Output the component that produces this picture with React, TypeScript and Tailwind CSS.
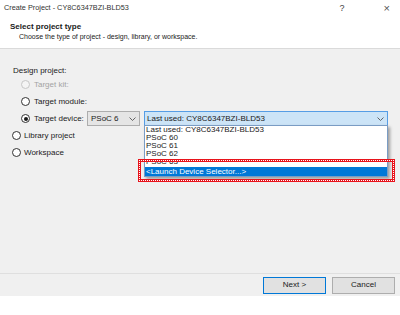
const font = { fontFamily: '"Liberation Sans", Arial, sans-serif' };

function Radio({ checked = false, disabled = false }: { checked?: boolean; disabled?: boolean }) {
  return (
    <span
      className={`flex h-[9px] w-[9px] shrink-0 items-center justify-center rounded-full border ${
        disabled ? 'border-[#c6c6c6] bg-[#f4f4f4]' : 'border-[#333333] bg-white'
      }`}
    >
      {checked && <span className="h-[4px] w-[4px] rounded-full bg-[#1a1a1a]" />}
    </span>
  );
}

function Chevron({ className = '' }: { className?: string }) {
  return (
    <svg width="7" height="4" viewBox="0 0 7 4" className={className}>
      <path d="M0.5 0.5 L3.5 3.5 L6.5 0.5" fill="none" stroke="#555" strokeWidth="0.9" />
    </svg>
  );
}

export default function App() {
  const items = ['Last used: CY8C6347BZI-BLD53', 'PSoC 60', 'PSoC 61', 'PSoC 62', 'PSoC 63'];

  return (
    <div className="relative h-[315px] w-[400px] overflow-hidden bg-white text-[#1a1a1a]" style={font}>
      {/* Title bar + header */}
      <div className="flex h-[17px] items-center pl-[4px] text-[7.3px] text-[#333]">
        <span>Create Project - CY8C6347BZI-BLD53</span>
        <span className="ml-auto mr-[39px] text-[9px] text-[#444]">?</span>
        <span className="mr-[10px] text-[11px] leading-none text-[#555]">×</span>
      </div>
      <div className="h-[32px] border-b border-[#dadada] pl-[10px] pt-[5px]">
        <div className="text-[8px] font-bold leading-[10px]">Select project type</div>
        <div className="pl-[9px] text-[7px] leading-[10px] text-[#222]">
          Choose the type of project - design, library, or workspace.
        </div>
      </div>

      {/* Body */}
      <div className="h-[225px] border-b border-[#dfdfdf] bg-[#f0f0f0] pl-[12px] pt-[17px] text-[8px]">
        <div className="ml-[1px] h-[10px] leading-[10px]">Design project:</div>
        <div className="ml-[9px]">
          <div className="flex h-[17px] items-center gap-[4px] text-[#a3a3a3]">
            <Radio disabled />
            <span>Target kit:</span>
          </div>
          <div className="flex h-[17px] items-center gap-[4px]">
            <Radio />
            <span>Target module:</span>
          </div>
          <div className="flex h-[17px] items-center">
            <Radio checked />
            <span className="ml-[4px] w-[53px]">Target device:</span>
            <div className="flex h-[15px] w-[53px] items-center border border-[#adadad] bg-[#e5e5e5] pl-[3px] pr-[3px]">
              <span>PSoC 6</span>
              <Chevron className="ml-auto" />
            </div>
            <div className="ml-[4px] flex h-[15px] w-[244px] items-center border border-[#569de5] bg-[#cce4f7] pl-[2px] pr-[3px]">
              <span>Last used: CY8C6347BZI-BLD53</span>
              <Chevron className="ml-auto" />
            </div>
          </div>
        </div>
        <div className="flex h-[17px] items-center gap-[3px]">
          <Radio />
          <span>Library project</span>
        </div>
        <div className="flex h-[17px] items-center gap-[3px]">
          <Radio />
          <span>Workspace</span>
        </div>
      </div>

      {/* Footer */}
      <div className="flex h-[22px] items-center justify-end gap-[6px] bg-[#f0f0f0] pr-[5px] text-[8px]">
        <button className="h-[17px] w-[63px] border border-[#0078d7] bg-[#e1e1e1]">Next &gt;</button>
        <button className="h-[17px] w-[63px] border border-[#adadad] bg-[#e1e1e1]">Cancel</button>
      </div>

      {/* Open dropdown list */}
      <div className="absolute left-[144px] top-[125px] h-[52px] w-[244px] border border-[#7a9cc4] bg-white text-[8px] shadow-[2px_2px_3px_rgba(0,0,0,0.35)]">
        {items.map((it) => (
          <div key={it} className="h-[8px] pl-[1px] leading-[8px]">
            {it}
          </div>
        ))}
        <div className="mt-[1px] h-[9px] bg-[#0078d7] pl-[1px] leading-[9px] text-white">&lt;Launch Device Selector...&gt;</div>
      </div>

      {/* Red annotation box */}
      <div className="absolute left-[138px] top-[159px] h-[23px] w-[257px] border-[3px] border-[#e8141c]">
        <div className="absolute -inset-[2px] border border-dotted border-white" />
      </div>
    </div>
  );
}
